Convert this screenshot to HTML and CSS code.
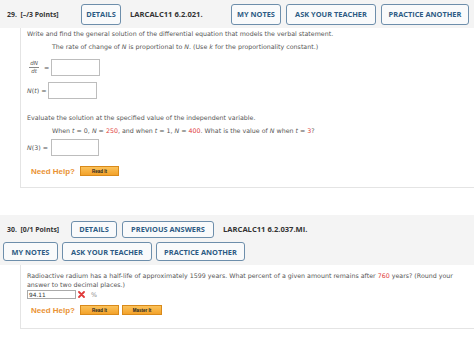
FILE: index.html
```html
<!DOCTYPE html>
<html>
<head>
<meta charset="utf-8">
<link rel="stylesheet" href="styles.css">
</head>
<body>
<div class="q">
  <div class="qhead h1">
    <span class="qnum">29.&nbsp; [–/3 Points]</span>
    <span class="btn b-details1">DETAILS</span>
    <span class="code code1">LARCALC11 6.2.021.</span>
    <span class="btn b-notes1">MY NOTES</span>
    <span class="btn b-ask1">ASK YOUR TEACHER</span>
    <span class="btn b-prac1">PRACTICE ANOTHER</span>
  </div>
  <div class="qbody body1">
    <p class="txt">Write and find the general solution of the differential equation that models the verbal statement.</p>
    <p class="txt ind">The rate of change of <i>N</i> is proportional to <i>N</i>. (Use <i>k</i> for the proportionality constant.)</p>
    <div class="row r-frac">
      <span class="frac"><span class="num"><i>dN</i></span><span class="den"><i>dt</i></span></span>
      <span class="eq">=</span>
      <span class="box"></span>
    </div>
    <div class="row r-nt">
      <span class="lbl"><i>N</i>(<i>t</i>) =</span>
      <span class="box"></span>
    </div>
    <p class="txt eval">Evaluate the solution at the specified value of the independent variable.</p>
    <p class="txt ind">When <i>t</i> = 0, <i>N</i> = <span class="red">250</span>, and when <i>t</i> = 1, <i>N</i> = <span class="red">400</span>. What is the value of <i>N</i> when <i>t</i> = <span class="red">3</span>?</p>
    <div class="row r-n3">
      <span class="lbl"><i>N</i>(3) =</span>
      <span class="box box3"></span>
    </div>
    <div class="help h-1">
      <span class="need">Need Help?</span>
      <span class="obtn">Read It</span>
    </div>
  </div>
</div>

<div class="q q2">
  <div class="qhead h2">
    <div class="hrow">
      <span class="qnum">30.&nbsp; [0/1 Points]</span>
      <span class="btn b-details2">DETAILS</span>
      <span class="btn b-prev">PREVIOUS ANSWERS</span>
      <span class="code code2">LARCALC11 6.2.037.MI.</span>
    </div>
    <div class="hrow hrow2">
      <span class="btn b-notes2">MY NOTES</span>
      <span class="btn b-ask2">ASK YOUR TEACHER</span>
      <span class="btn b-prac2">PRACTICE ANOTHER</span>
    </div>
  </div>
  <div class="qbody body2">
    <p class="txt">Radioactive radium has a half-life of approximately 1599 years. What percent of a given amount remains after <span class="red">760</span> years? (Round your answer to two decimal places.)</p>
    <div class="ans">
      <span class="abox">94.11</span>
      <svg class="xmark" width="7" height="7" viewBox="0 0 7 7"><path d="M1 1 L6 6 M6 1 L1 6" stroke="#e03a3a" stroke-width="1.8" stroke-linecap="round"/></svg>
      <span class="pct">%</span>
    </div>
    <div class="help h-2">
      <span class="need">Need Help?</span>
      <span class="obtn">Read It</span>
      <span class="obtn obtn2">Master It</span>
    </div>
  </div>
</div>
</body>
</html>
```

FILE: styles.css
```css
html, body {
  margin: 0;
  padding: 0;
  background: #ffffff;
}
body {
  width: 474px;
  height: 348px;
  overflow: hidden;
}
p { margin: 0; }

.qhead {
  background: #f4f4f4;
  font-family: "Open Sans", sans-serif;
  font-weight: 700;
  font-size: 7.6px;
  color: #333333;
}
.h1 {
  height: 28px;
  display: flex;
  align-items: center;
  padding-left: 7px;
  box-sizing: border-box;
}
.qnum { white-space: pre; font-size: 6.9px; }
.btn {
  display: inline-flex;
  align-items: center;
  justify-content: center;
  box-sizing: border-box;
  border: 1px solid #6d8eab;
  border-radius: 3px;
  background: #f9fafb;
  color: #2d5a84;
  font-weight: 700;
  font-size: 7.4px;
  white-space: nowrap;
}
.h1 .btn { height: 21px; }
.h1 .qnum { width: 74px; }
.b-details1 { width: 40px; }
.code1 { width: 110px; padding-left: 9px; box-sizing: border-box; }
.b-notes1 { width: 50px; }
.b-ask1 { width: 90px; margin-left: 5px; }
.b-prac1 { width: 88px; margin-left: 5px; }

.qbody {
  margin-left: 20px;
  border-left: 1px solid #e4e4e4;
  border-bottom: 1px solid #e4e4e4;
  padding-left: 6px;
  font-family: "DejaVu Sans", Verdana, sans-serif;
  font-size: 6.3px;
  color: #555555;
}
.txt { line-height: 9px; white-space: nowrap; }
.ind { padding-left: 25px; }
.red { color: #e03a3a; }

.body1 { padding-top: 1px; height: 160px; box-sizing: border-box; }
.body1 .ind { margin-top: 4px; }
.row {
  display: flex;
  align-items: center;
}
.r-frac { margin-top: 8px; height: 17px; }
.frac {
  display: inline-flex;
  flex-direction: column;
  align-items: center;
  width: 12px;
  margin-left: 1px;
  font-size: 5.6px;
  line-height: 7px;
}
.frac .num { border-bottom: 1px solid #888; padding: 0 1px; }
.eq { margin-left: 4px; margin-right: 2px; }
.box {
  display: inline-block;
  width: 49px;
  height: 17px;
  box-sizing: border-box;
  border: 1px solid #bdbdbd;
  background: #fff;
}
.r-nt { margin-top: 6px; height: 17px; }
.r-nt .lbl { margin-right: 2px; }
.eval { margin-top: 14px; }
.r-n3 { margin-top: 4px; height: 17px; }
.r-n3 .lbl { margin-right: 3px; }
.box3 { width: 48px; }

.help {
  display: flex;
  align-items: center;
}
.h-1 { margin-top: 10px; padding-left: 4px; }
.need {
  font-family: "Liberation Sans", Arial, sans-serif;
  font-weight: 700;
  font-size: 8px;
  color: #ea9233;
  margin-right: 5px;
}
.obtn {
  display: inline-flex;
  align-items: center;
  justify-content: center;
  width: 39px;
  height: 10px;
  box-sizing: border-box;
  border: 1px solid #d98a1a;
  background: linear-gradient(#fbc25a, #f3a22a);
  font-family: "Liberation Sans", Arial, sans-serif;
  font-weight: 700;
  font-size: 4.5px;
  color: #222;
}
.obtn2 { width: 40px; margin-left: 3px; }

.q2 { margin-top: 27px; }
.h2 {
  padding: 5px 0 4px 3px;
}
.hrow {
  display: flex;
  align-items: center;
  height: 18px;
}
.hrow .qnum { margin-left: 4px; width: 64px; }
.h2 .btn { height: 17px; }
.b-details2 { width: 46px; }
.b-prev { width: 92px; margin-left: 5px; }
.code2 { margin-left: 9px; }
.hrow2 { margin-top: 4px; height: 19px; }
.hrow2 .btn { height: 19px; }
.b-notes2 { width: 55px; }
.b-ask2 { width: 90px; margin-left: 4px; }
.b-prac2 { width: 89px; margin-left: 4px; }

.body2 { padding-top: 6px; padding-bottom: 13px; }
.body2 .txt { line-height: 9px; white-space: normal; padding-right: 4px; }
.ans {
  display: flex;
  align-items: center;
  margin-top: 1px;
  height: 9px;
}
.abox {
  display: inline-flex;
  align-items: center;
  width: 49px;
  height: 9px;
  box-sizing: border-box;
  border: 1px solid #aaa;
  padding-left: 1px;
  font-size: 5.8px;
  color: #333;
}
.xmark { margin-left: 2px; }
.pct { margin-left: 6px; color: #888; }
.h-2 { margin-top: 6px; padding-left: 4px; }
```
